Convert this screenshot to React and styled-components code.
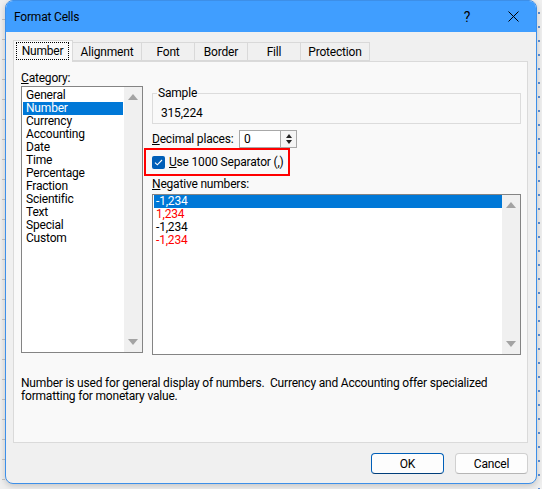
import React from "react";
import styled, { createGlobalStyle } from "styled-components";

const GlobalStyle = createGlobalStyle`
  html, body {
    margin: 0;
    padding: 0;
  }
  body {
    width: 542px;
    height: 489px;
    overflow: hidden;
    background: #efefef;
    font-family: Roboto, "Noto Sans", sans-serif;
    font-size: 12px;
    letter-spacing: -0.19px;
    color: #000;
  }
`;

const Page = styled.div`
  height: 489px;
  padding-left: 5px;
  box-sizing: border-box;
  background:
    repeating-linear-gradient(180deg, transparent 0 19px, #c4c4c4 19px 20px) 2px 0 / 3px 100% no-repeat,
    repeating-linear-gradient(180deg, transparent 0 12px, #5b8fd6 12px 14px) 538px 0 / 2px 100% no-repeat,
    #efefef;
`;

const Dialog = styled.div`
  width: 532px;
  height: 484px;
  box-sizing: border-box;
  border: 1px solid #3d8fe8;
  border-radius: 8px;
  overflow: hidden;
  background: #f0f0f0;
  display: flex;
  flex-direction: column;
  box-shadow: 0 2px 6px rgba(0, 0, 0, 0.18);
`;

const TitleBar = styled.div`
  height: 31px;
  flex: none;
  background: #409eff;
  display: flex;
  align-items: center;
  padding-left: 8px;
`;

const Title = styled.div`
  flex: 1;
  font-size: 12px;
`;

const CaptionButton = styled.div`
  width: 46px;
  height: 31px;
  display: flex;
  align-items: center;
  justify-content: center;
  font-size: 14px;
`;

const Content = styled.div`
  padding: 8px 8px 0 7px;
  display: flex;
  flex-direction: column;
`;

const TabRow = styled.div`
  display: flex;
  align-items: flex-end;
  height: 21px;
  position: relative;
  z-index: 1;
`;

const Tab = styled.div`
  width: ${({ w }) => w}px;
  height: ${({ active }) => (active ? 22 : 19)}px;
  box-sizing: border-box;
  margin-left: -1px;
  margin-bottom: ${({ active }) => (active ? -1 : 0)}px;
  border: 1px solid #d9d9d9;
  border-bottom: ${({ active }) => (active ? "none" : "1px solid #d9d9d9")};
  background: ${({ active }) => (active ? "#f9f9f9" : "#f0f0f0")};
  display: flex;
  align-items: ${({ active }) => (active ? "flex-start" : "center")};
  justify-content: center;
  padding: ${({ active }) => (active ? "1px 3px 0 2px" : "0")};
  &:first-child {
    margin-left: 0;
  }
`;

const FocusLabel = styled.span`
  flex: 1;
  height: 16px;
  border: 1px dotted #000;
  display: flex;
  align-items: center;
  justify-content: center;
`;

const Panel = styled.div`
  height: 382px;
  box-sizing: border-box;
  border: 1px solid #dadada;
  background: #f9f9f9;
  padding: 8px 6px 0 7px;
`;

const Columns = styled.div`
  display: flex;
  gap: 9px;
`;

const LeftColumn = styled.div`
  width: 122px;
  display: flex;
  flex-direction: column;
`;

const RightColumn = styled.div`
  width: 369px;
  display: flex;
  flex-direction: column;
`;

const Label = styled.div`
  height: ${({ h }) => h || 16}px;
  line-height: ${({ h }) => h || 16}px;
  white-space: nowrap;
`;

const ListBox = styled.div`
  height: ${({ h }) => h}px;
  margin-top: ${({ gap }) => gap || 0}px;
  box-sizing: border-box;
  border: 1px solid #848484;
  background: #fff;
  display: flex;
`;

const Items = styled.div`
  flex: 1;
  padding: ${({ pad }) => pad};
`;

const Item = styled.div`
  height: 13px;
  line-height: 13px;
  padding-left: ${({ indent }) => indent}px;
  background: ${({ selected }) => (selected ? "#0078d7" : "transparent")};
  color: ${({ selected, red }) => (selected ? "#fff" : red ? "#ff0000" : "#000")};
`;

const ScrollBar = styled.div`
  width: 18px;
  background: #f0f0f0;
  display: flex;
  flex-direction: column;
  justify-content: space-between;
  align-items: center;
  padding: 7px 0;
`;

const Arrow = styled.div`
  width: 0;
  height: 0;
  border-left: 5px solid transparent;
  border-right: 5px solid transparent;
  ${({ down }) =>
    down ? "border-top: 6px solid #a3a3a3;" : "border-bottom: 6px solid #a3a3a3;"}
`;

const Group = styled.fieldset`
  margin: 15px 0 0 0;
  padding: 5px 8px 2px 8px;
  border: 1px solid #dcdcdc;
  min-width: 0;
`;

const Legend = styled.legend`
  padding: 0 1px;
  margin-left: -4px;
  line-height: 16px;
`;

const SampleValue = styled.div`
  line-height: 15px;
`;

const DecimalRow = styled.div`
  display: flex;
  align-items: center;
  margin-top: 6px;
  height: 18px;
`;

const DecimalLabel = styled.div`
  width: 87px;
`;

const NumberInput = styled.div`
  width: 41px;
  height: 18px;
  box-sizing: border-box;
  border: 1px solid #a8a8a8;
  border-right: none;
  background: #fff;
  padding-left: 4px;
  line-height: 16px;
`;

const Spinner = styled.div`
  width: 17px;
  height: 18px;
  box-sizing: border-box;
  border: 1px solid #a8a8a8;
  background: #f5f5f5;
  display: flex;
  flex-direction: column;
  align-items: center;
  justify-content: space-around;
  padding: 2px 0;
`;

const SpinArrow = styled.div`
  width: 0;
  height: 0;
  border-left: 3.5px solid transparent;
  border-right: 3.5px solid transparent;
  ${({ down }) =>
    down ? "border-top: 4px solid #222;" : "border-bottom: 4px solid #222;"}
`;

const Highlight = styled.div`
  margin-left: -8px;
  width: 146px;
  height: 28px;
  box-sizing: border-box;
  border: 2px solid #ff0000;
  display: flex;
  align-items: center;
  padding-left: 6px;
  gap: 4px;
`;

const CheckBox = styled.div`
  width: 13px;
  height: 13px;
  border-radius: 2px;
  background: #005fb8;
  display: flex;
  align-items: center;
  justify-content: center;
`;

const Description = styled.div`
  margin-top: 22px;
  line-height: 13px;
`;

const Footer = styled.div`
  display: flex;
  justify-content: flex-end;
  gap: 11px;
  padding-top: 10px;
`;

const Button = styled.div`
  width: 73px;
  height: 21px;
  box-sizing: border-box;
  border: 1px solid ${({ primary }) => (primary ? "#005fb8" : "#d0d0d0")};
  border-bottom-color: ${({ primary }) => (primary ? "#003e7a" : "#b5b5b5")};
  border-radius: 4px;
  background: #fdfdfd;
  display: flex;
  align-items: center;
  justify-content: center;
`;

const categories = [
  "General",
  "Number",
  "Currency",
  "Accounting",
  "Date",
  "Time",
  "Percentage",
  "Fraction",
  "Scientific",
  "Text",
  "Special",
  "Custom",
];

const negatives = [
  { text: "-1,234", red: false },
  { text: "1,234", red: true },
  { text: "-1,234", red: false },
  { text: "-1,234", red: true },
];

const tabs = [
  { name: "Number", w: 60 },
  { name: "Alignment", w: 70 },
  { name: "Font", w: 54 },
  { name: "Border", w: 54 },
  { name: "Fill", w: 54 },
  { name: "Protection", w: 70 },
];

const App = () => {
  return (
    <Page>
      <GlobalStyle />
      <Dialog>
        <TitleBar>
          <Title>Format Cells</Title>
          <CaptionButton>?</CaptionButton>
          <CaptionButton>
            <svg width="11" height="11" viewBox="0 0 11 11">
              <path d="M0.5 0.5 L10.5 10.5 M10.5 0.5 L0.5 10.5" stroke="#000" strokeWidth="1" />
            </svg>
          </CaptionButton>
        </TitleBar>
        <Content>
          <TabRow>
            {tabs.map((t, i) => (
              <Tab key={t.name} w={t.w} active={i === 0}>
                {i === 0 ? <FocusLabel>{t.name}</FocusLabel> : t.name}
              </Tab>
            ))}
          </TabRow>
          <Panel>
            <Columns>
              <LeftColumn>
                <Label>
                  <u>C</u>ategory:
                </Label>
                <ListBox h={267}>
                  <Items pad="2px 1px 0 1px">
                    {categories.map((c) => (
                      <Item key={c} indent={3} selected={c === "Number"}>
                        {c}
                      </Item>
                    ))}
                  </Items>
                  <ScrollBar>
                    <Arrow />
                    <Arrow down />
                  </ScrollBar>
                </ListBox>
              </LeftColumn>
              <RightColumn>
                <Group>
                  <Legend>Sample</Legend>
                  <SampleValue>315,224</SampleValue>
                </Group>
                <DecimalRow>
                  <DecimalLabel>
                    <u>D</u>ecimal places:
                  </DecimalLabel>
                  <NumberInput>0</NumberInput>
                  <Spinner>
                    <SpinArrow />
                    <SpinArrow down />
                  </Spinner>
                </DecimalRow>
                <Highlight>
                  <CheckBox>
                    <svg width="9" height="7" viewBox="0 0 9 7">
                      <path d="M1 3.6 L3.3 5.8 L8 1" fill="none" stroke="#fff" strokeWidth="1.1" />
                    </svg>
                  </CheckBox>
                  <span>
                    <u>U</u>se 1000 Separator (,)
                  </span>
                </Highlight>
                <Label h={17}>
                  <u>N</u>egative numbers:
                </Label>
                <ListBox h={161} gap={1}>
                  <Items pad="0 0 0 1px">
                    {negatives.map((n, i) => (
                      <Item key={i} indent={2} selected={i === 0} red={n.red}>
                        {n.text}
                      </Item>
                    ))}
                  </Items>
                  <ScrollBar>
                    <Arrow />
                    <Arrow down />
                  </ScrollBar>
                </ListBox>
              </RightColumn>
            </Columns>
            <Description>
              Number is used for general display of numbers.&nbsp; Currency and Accounting offer specialized
              <br />
              formatting for monetary value.
            </Description>
          </Panel>
          <Footer>
            <Button primary>OK</Button>
            <Button>Cancel</Button>
          </Footer>
        </Content>
      </Dialog>
    </Page>
  );
};

export default App;
